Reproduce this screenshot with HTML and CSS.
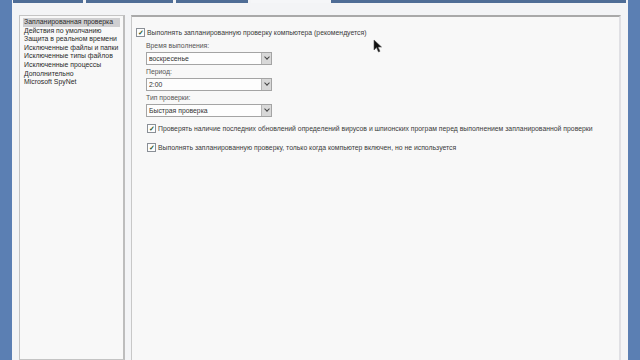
FILE: index.html
```html
<!DOCTYPE html>
<html lang="ru">
<head>
  <meta charset="UTF-8">
  <title>Параметры</title>
  <link rel="stylesheet" href="styles.css">
</head>
<body>
  <div class="frame">
    <div class="edge"></div>
    <div class="main">
      <div class="tabs">
        <span class="tab t1"></span>
        <span class="tab t2"></span>
        <span class="tab t3"></span>
        <span class="tab active"></span>
        <span class="tab rest"></span>
      </div>
      <div class="panes">
        <ul class="nav">
          <li class="selected">Запланированная проверка</li>
          <li>Действия по умолчанию</li>
          <li>Защита в реальном времени</li>
          <li>Исключенные файлы и папки</li>
          <li>Исключенные типы файлов</li>
          <li>Исключенные процессы</li>
          <li>Дополнительно</li>
          <li>Microsoft SpyNet</li>
        </ul>
        <div class="content">
          <label class="check top"><span class="box">✓</span>Выполнять запланированную проверку компьютера (рекомендуется)</label>
          <div class="group">
            <div class="field-label">Время выполнения:</div>
            <div class="select"><span>воскресенье</span><i class="arrow"></i></div>
            <div class="field-label">Период:</div>
            <div class="select"><span>2:00</span><i class="arrow"></i></div>
            <div class="field-label">Тип проверки:</div>
            <div class="select"><span>Быстрая проверка</span><i class="arrow"></i></div>
            <label class="check first"><span class="box">✓</span>Проверять наличие последних обновлений определений вирусов и шпионских програм перед выполнением запланированной проверки</label>
            <label class="check second"><span class="box">✓</span>Выполнять запланированную проверку, только когда компьютер включен, но не используется</label>
          </div>
          <svg class="cursor" width="10" height="14" viewBox="0 0 10 14"><path d="M1 1 L1 11 L3.5 8.5 L5.5 13 L7 12.3 L5 8 L8.5 8 Z" fill="#111" stroke="#555" stroke-width="0.6"/></svg>
        </div>
      </div>
    </div>
    <div class="edge"></div>
  </div>
</body>
</html>
```

FILE: styles.css
```css
body {
  margin: 0;
  background: #f4f5f7;
  font-family: 'Liberation Sans', Arial, sans-serif;
  color: #3a3a3a;
}
.frame {
  display: flex;
  width: 640px;
  height: 360px;
  overflow: hidden;
}
.edge {
  width: 12px;
  background: #5b7fb3;
}
.main {
  flex: 1;
  display: flex;
  flex-direction: column;
  background: #f3f4f6;
}
.tabs {
  display: flex;
  height: 3px;
  gap: 3px;
  padding-left: 1px;
}
.tab {
  background: #4f6d96;
}
.t1 { width: 70px; }
.t2 { width: 87px; }
.t3 { width: 72px; }
.tab.active {
  width: 80px;
  background: #f5f6f8;
}
.tab.rest {
  flex: 1;
  margin-left: -3px;
  margin-right: 2px;
}
.panes {
  flex: 1;
  display: flex;
  gap: 6px;
  padding: 12px 7px 0 7px;
}
.nav {
  list-style: none;
  margin: 0;
  padding: 2px 3px;
  width: 97px;
  background: #f8f8f8;
  border: 1px solid #c4c4c4;
  border-right: 2px solid #bdbdbd;
  font-size: 6.9px;
  line-height: 8.6px;
  color: #2a2a2a;
}
.nav li {
  white-space: nowrap;
  padding-left: 1px;
}
.nav li.selected {
  background: #cfcfd1;
}
.content {
  position: relative;
  flex: 1;
  background: #f8f8f8;
  border-top: 2px solid #a9a9a9;
  border-left: 1px solid #c8c8c8;
  border-right: 2px solid #e0e0e4;
  padding: 11px 7px 0 4px;
  font-size: 6.85px;
}
.check {
  display: flex;
  align-items: center;
  gap: 2px;
  height: 9px;
  line-height: 9px;
  white-space: nowrap;
  color: #3a3a3a;
}
.box {
  width: 7px;
  height: 7px;
  border: 1px solid #8a8f96;
  background: #fdfdfd;
  color: #2d5b2d;
  font-size: 7px;
  line-height: 7px;
  text-align: center;
  font-weight: bold;
}
.group {
  padding-left: 10px;
}
.field-label {
  margin-top: 3px;
  height: 8px;
  line-height: 8px;
  color: #555;
}
.group .field-label:first-child {
  margin-top: 5px;
}
.select {
  display: flex;
  align-items: center;
  justify-content: space-between;
  width: 122px;
  height: 11px;
  margin-top: 2px;
  border: 1px solid #a4a4a4;
  background: #fdfdfd;
  padding-left: 2px;
  color: #333;
}
.arrow {
  width: 9px;
  height: 11px;
  background: #d8d8d8;
  border-left: 1px solid #b5b5b5;
  position: relative;
}
.arrow::after {
  content: '';
  position: absolute;
  left: 2.5px;
  top: 2px;
  width: 3px;
  height: 3px;
  border-right: 1.5px solid #444;
  border-bottom: 1.5px solid #444;
  transform: rotate(45deg);
}
.check.first {
  margin-top: 7px;
  margin-left: 1px;
}
.check.second {
  margin-top: 10px;
  margin-left: 1px;
}
.cursor {
  position: absolute;
  left: 241px;
  top: 22px;
}
```
